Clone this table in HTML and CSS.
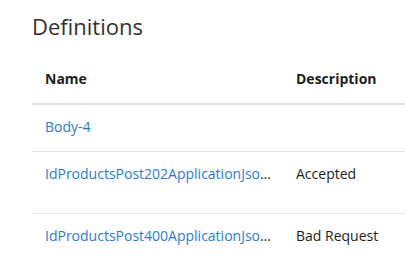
FILE: index.html
```html
<!DOCTYPE html>
<html lang="en">
<head>
  <meta charset="UTF-8" />
  <title>Definitions</title>
  <link rel="stylesheet" href="styles.css">
</head>
<body>
  <div class="page">
    <h2 class="page-title">Definitions</h2>

    <table class="def-table">
      <thead>
        <tr>
          <th class="col-name">Name</th>
          <th class="col-desc">Description</th>
        </tr>
      </thead>
      <tbody>
        <tr>
          <td class="col-name"><a href="#">Body-4</a></td>
          <td class="col-desc"></td>
        </tr>
        <tr class="tall">
          <td class="col-name"><a href="#">IdProductsPost202ApplicationJsonResponse</a></td>
          <td class="col-desc">Accepted</td>
        </tr>
        <tr class="tall">
          <td class="col-name"><a href="#">IdProductsPost400ApplicationJsonResponse</a></td>
          <td class="col-desc">Bad Request</td>
        </tr>
      </tbody>
    </table>
  </div>
</body>
</html>
```

FILE: styles.css
```css
body {
  font-family: 'Open Sans', sans-serif;
  background-color: #fff;
  color: #201f1e;
  margin: 0;
  padding: 0;
  overflow: hidden;
}

.page {
  padding: 10px 0 0 32px;
}

.page-title {
  font-size: 22px;
  font-weight: 400;
  line-height: 32px;
  margin: 0 0 17px 0;
  color: #323130;
}

.def-table {
  border-collapse: collapse;
  table-layout: fixed;
  width: 373px;
  font-size: 14px;
}

.def-table th {
  text-align: left;
  font-weight: 700;
  padding: 10px 13px 14px 13px;
  border-bottom: 2px solid #dfe2e6;
  line-height: 20px;
}

.def-table td {
  text-align: left;
  vertical-align: top;
  padding: 12px 13px 14px 13px;
  line-height: 20px;
  border-bottom: 1px solid #e6e6e6;
}

.def-table tr.tall td {
  padding-bottom: 29px;
}

.def-table .col-name {
  width: 232px;
  padding-right: 6px;
  white-space: nowrap;
  overflow: hidden;
  text-overflow: ellipsis;
}

.def-table a {
  color: #2b7bd4;
  text-decoration: none;
}
```
